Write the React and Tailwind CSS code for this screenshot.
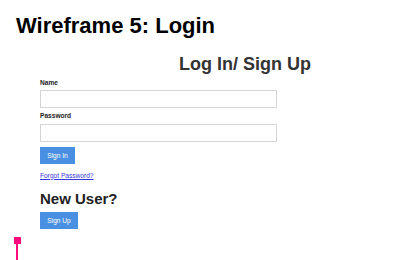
export default function App() {
  return (
    <div className="relative w-[403px] h-[260px] overflow-hidden bg-white font-['Liberation_Sans',Arial,sans-serif]">
      <h1 className="pl-4 pt-[12.5px] text-[22px] leading-[26px] font-bold text-black">Wireframe 5: Login</h1>

      <div className="ml-10 w-[410px]">
        <h2 className="mt-[14px] text-center text-[18px] leading-[22px] font-bold text-[#333]">Log In/ Sign Up</h2>

        <form className="flex flex-col items-start">
          <label className="mt-[4px] text-[6.6px] leading-[8px] font-bold text-[#222]">Name</label>
          <input className="mt-[3.5px] w-[237px] h-[18px] border border-[#d4d4d4] bg-white outline-none" />

          <label className="mt-[4px] text-[6.6px] leading-[8px] font-bold text-[#222]">Password</label>
          <input type="password" className="mt-[4px] w-[237px] h-[18px] border border-[#d4d4d4] bg-white outline-none" />

          <button type="button" className="mt-[5px] w-[35px] h-[17px] bg-[#4a90e2] text-white text-[6.6px] leading-[17px]">Sign In</button>

          <a href="#" className="mt-[7.5px] text-[6.6px] leading-[8px] text-[#3535e0] underline">Forgot Password?</a>
        </form>

        <h2 className="mt-[10px] text-[15px] leading-[18px] font-bold text-[#222]">New User?</h2>
        <button type="button" className="block mt-[4.5px] w-[38px] h-[17px] bg-[#4a90e2] text-white text-[6.6px] leading-[17px]">Sign Up</button>
      </div>

      {/* annotation pin */}
      <div className="absolute left-[14px] top-[237px] w-[7px] h-[7px] bg-[#ff0a7f]" />
      <div className="absolute left-[16px] top-[244px] w-[2px] h-[16px] bg-[#ff0a7f]" />
    </div>
  );
}
